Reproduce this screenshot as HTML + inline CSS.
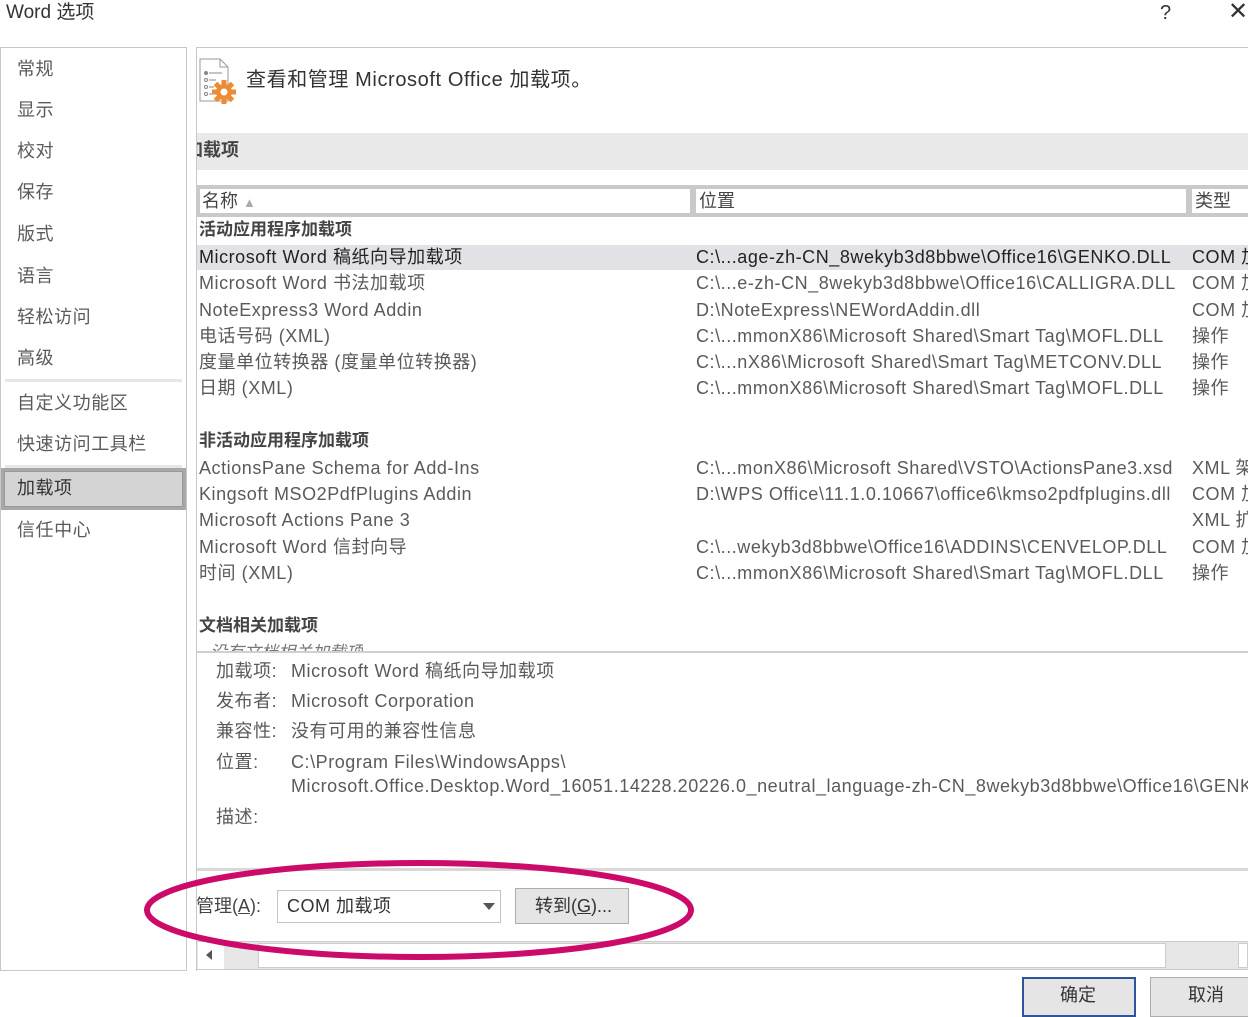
<!DOCTYPE html>
<html><head><meta charset="utf-8"><style>
*{margin:0;padding:0;box-sizing:border-box}
body{width:1248px;height:1009px;background:#fff;position:relative;overflow:hidden;font-family:"Liberation Sans","Noto Sans CJK SC",sans-serif;font-size:18px;color:#444}
.a{position:absolute;white-space:nowrap;line-height:24px}
.g{color:#5a5a5a;letter-spacing:.55px}
.b{font-weight:bold;color:#444;font-size:17px}
</style></head><body>
<div class="a" style="left:6px;top:1px;font-size:19px;color:#333">Word 选项</div>
<div class="a" style="left:1160px;top:1px;font-size:20px;color:#333">?</div>
<div class="a" style="left:1228px;top:0px;font-size:24px;color:#333">✕</div>

<div class="a" style="left:0;top:47px;width:187px;height:924px;border:1px solid #c8c8c8;background:#fff"></div>
<div class="a g" style="left:17px;top:57px">常规</div>
<div class="a g" style="left:17px;top:98px">显示</div>
<div class="a g" style="left:17px;top:139px">校对</div>
<div class="a g" style="left:17px;top:180px">保存</div>
<div class="a g" style="left:17px;top:222px">版式</div>
<div class="a g" style="left:17px;top:264px">语言</div>
<div class="a g" style="left:17px;top:305px">轻松访问</div>
<div class="a g" style="left:17px;top:346px">高级</div>
<div class="a" style="left:5px;top:379px;width:177px;height:3px;background:#e6e6e6"></div>
<div class="a g" style="left:17px;top:391px">自定义功能区</div>
<div class="a g" style="left:17px;top:432px">快速访问工具栏</div>
<div class="a" style="left:5px;top:465px;width:177px;height:3px;background:#e6e6e6"></div>
<div class="a" style="left:1px;top:468px;width:185px;height:42px;background:#a8a8a8"></div>
<div class="a" style="left:4px;top:471px;width:179px;height:36px;background:#d4d4d4;border:1px solid #999"></div>
<div class="a" style="left:17px;top:476px;color:#333;letter-spacing:.5px">加载项</div>
<div class="a g" style="left:17px;top:518px">信任中心</div>

<div class="a" style="left:196px;top:47px;width:1px;height:924px;background:#c8c8c8"></div>
<div class="a" style="left:196px;top:47px;width:1052px;height:1px;background:#c8c8c8"></div>
<svg class="a" style="left:198px;top:57px" width="42" height="48" viewBox="0 0 42 48">
<path d="M2 2H22L30 10V44H2Z" fill="#fff" stroke="#999" stroke-width="1"/>
<path d="M22 2V10H30" fill="none" stroke="#999"/>
<g fill="none" stroke="#888" stroke-width="1"><circle cx="8" cy="16" r="1.5" fill="#888"/><circle cx="8" cy="23" r="1.5"/><circle cx="8" cy="30" r="1.5"/><circle cx="8" cy="37" r="1.5"/><path d="M11 16H24M11 23H18M11 30H16M11 37H16"/></g>
<g fill="#ed8b34" transform="translate(26 35)"><circle r="8"/><rect x="-2.5" y="-12" width="5" height="24"/><rect x="-12" y="-2.5" width="24" height="5"/><rect x="-2.5" y="-12" width="5" height="24" transform="rotate(45)"/><rect x="-2.5" y="-12" width="5" height="24" transform="rotate(-45)"/><circle r="3.5" fill="#fff"/></g>
</svg>
<div class="a" style="left:246px;top:68px;font-size:20px;color:#333;letter-spacing:.6px">查看和管理 Microsoft Office 加载项。</div>
<div class="a" style="left:197px;top:133px;width:1051px;height:37px;background:#e9e9e9"></div>
<div class="a" style="left:197px;top:138px;font-weight:bold;color:#444;width:42px;overflow:hidden;direction:rtl">加载项</div>

<div class="a" style="left:197px;top:185px;width:1051px;height:32px;background:#c9c9c9"></div>
<div class="a" style="left:200px;top:189px;width:490px;height:24px;background:#fff"></div>
<div class="a" style="left:696px;top:189px;width:490px;height:24px;background:#fff"></div>
<div class="a" style="left:1192px;top:189px;width:56px;height:24px;background:#fff"></div>
<div class="a" style="left:202px;top:189px;color:#444">名称 <span style="font-size:13px;color:#aaa">▲</span></div>
<div class="a" style="left:699px;top:189px;color:#444">位置</div>
<div class="a" style="left:1195px;top:189px;color:#444">类型</div>

<div class="a b" style="left:199px;top:218px">活动应用程序加载项</div>
<div class="a" style="left:197px;top:245px;width:1051px;height:25px;background:#e2e2e6"></div>
<div class="a g" style="left:199px;top:245px;color:#222">Microsoft Word 稿纸向导加载项</div>
<div class="a g" style="left:696px;top:245px;color:#222">C:\...age-zh-CN_8wekyb3d8bbwe\Office16\GENKO.DLL</div>
<div class="a g" style="left:1192px;top:245px;color:#222">COM 加</div>

<div class="a g" style="left:199px;top:271px">Microsoft Word 书法加载项</div>
<div class="a g" style="left:696px;top:271px">C:\...e-zh-CN_8wekyb3d8bbwe\Office16\CALLIGRA.DLL</div>
<div class="a g" style="left:1192px;top:271px">COM 加</div>
<div class="a g" style="left:199px;top:298px">NoteExpress3 Word Addin</div>
<div class="a g" style="left:696px;top:298px">D:\NoteExpress\NEWordAddin.dll</div>
<div class="a g" style="left:1192px;top:298px">COM 加</div>
<div class="a g" style="left:199px;top:324px">电话号码 (XML)</div>
<div class="a g" style="left:696px;top:324px">C:\...mmonX86\Microsoft Shared\Smart Tag\MOFL.DLL</div>
<div class="a g" style="left:1192px;top:324px">操作</div>
<div class="a g" style="left:199px;top:350px">度量单位转换器 (度量单位转换器)</div>
<div class="a g" style="left:696px;top:350px">C:\...nX86\Microsoft Shared\Smart Tag\METCONV.DLL</div>
<div class="a g" style="left:1192px;top:350px">操作</div>
<div class="a g" style="left:199px;top:376px">日期 (XML)</div>
<div class="a g" style="left:696px;top:376px">C:\...mmonX86\Microsoft Shared\Smart Tag\MOFL.DLL</div>
<div class="a g" style="left:1192px;top:376px">操作</div>

<div class="a b" style="left:199px;top:429px">非活动应用程序加载项</div>
<div class="a g" style="left:199px;top:456px">ActionsPane Schema for Add-Ins</div>
<div class="a g" style="left:696px;top:456px">C:\...monX86\Microsoft Shared\VSTO\ActionsPane3.xsd</div>
<div class="a g" style="left:1192px;top:456px">XML 架</div>
<div class="a g" style="left:199px;top:482px">Kingsoft MSO2PdfPlugins Addin</div>
<div class="a g" style="left:696px;top:482px;width:480px;overflow:hidden">D:\WPS Office\11.1.0.10667\office6\kmso2pdfplugins.dll</div>
<div class="a g" style="left:1192px;top:482px">COM 加</div>
<div class="a g" style="left:199px;top:508px">Microsoft Actions Pane 3</div>
<div class="a g" style="left:1192px;top:508px">XML 扩</div>
<div class="a g" style="left:199px;top:535px">Microsoft Word 信封向导</div>
<div class="a g" style="left:696px;top:535px">C:\...wekyb3d8bbwe\Office16\ADDINS\CENVELOP.DLL</div>
<div class="a g" style="left:1192px;top:535px">COM 加</div>
<div class="a g" style="left:199px;top:561px">时间 (XML)</div>
<div class="a g" style="left:696px;top:561px">C:\...mmonX86\Microsoft Shared\Smart Tag\MOFL.DLL</div>
<div class="a g" style="left:1192px;top:561px">操作</div>

<div class="a b" style="left:199px;top:614px">文档相关加载项</div>
<div class="a" style="left:210px;top:642px;height:10px;overflow:hidden;font-style:italic;color:#777;font-size:17px;line-height:22px">没有文档相关加载项</div>
<div class="a" style="left:197px;top:651px;width:1051px;height:2px;background:#d0d0d0"></div>

<div class="a g" style="left:216px;top:659px">加载项:</div>
<div class="a g" style="left:291px;top:659px">Microsoft Word 稿纸向导加载项</div>
<div class="a g" style="left:216px;top:689px">发布者:</div>
<div class="a g" style="left:291px;top:689px">Microsoft Corporation</div>
<div class="a g" style="left:216px;top:719px">兼容性:</div>
<div class="a g" style="left:291px;top:719px">没有可用的兼容性信息</div>
<div class="a g" style="left:216px;top:750px">位置:</div>
<div class="a g" style="left:291px;top:750px">C:\Program Files\WindowsApps\</div>
<div class="a g" style="left:291px;top:774px">Microsoft.Office.Desktop.Word_16051.14228.20226.0_neutral_language-zh-CN_8wekyb3d8bbwe\Office16\GENKO.DLL</div>
<div class="a g" style="left:216px;top:805px">描述:</div>
<div class="a" style="left:197px;top:868px;width:1051px;height:3px;background:#d8d8d8"></div>

<div class="a" style="left:196px;top:894px;color:#444">管理(<u>A</u>):</div>
<div class="a" style="left:277px;top:890px;width:224px;height:33px;border:1px solid #c4c4c4;background:#fff"></div>
<div class="a" style="left:287px;top:894px;color:#333;letter-spacing:.5px">COM 加载项</div>
<div class="a" style="left:483px;top:903px;width:0;height:0;border-left:6px solid transparent;border-right:6px solid transparent;border-top:7px solid #555"></div>
<div class="a" style="left:515px;top:888px;width:114px;height:36px;border:1px solid #adadad;background:#e5e5e5"></div>
<div class="a" style="left:535px;top:894px;color:#333">转到(<u>G</u>)...</div>

<div class="a" style="left:197px;top:941px;width:1051px;height:29px;background:#e6e6e6;border-top:1px solid #ccc;border-bottom:1px solid #ccc"></div>
<div class="a" style="left:198px;top:942px;width:26px;height:27px;background:#fff"></div>
<div class="a" style="left:206px;top:950px;width:0;height:0;border-top:5px solid transparent;border-bottom:5px solid transparent;border-right:6px solid #555"></div>
<div class="a" style="left:258px;top:943px;width:908px;height:25px;background:#fff;border:1px solid #ccc"></div>
<div class="a" style="left:1238px;top:943px;width:10px;height:25px;background:#fff;border:1px solid #ccc"></div>

<svg class="a" style="left:140px;top:855px" width="560" height="110"><ellipse cx="279" cy="55" rx="272" ry="47" fill="none" stroke="#cc0a6a" stroke-width="6"/></svg>

<div class="a" style="left:1022px;top:977px;width:114px;height:40px;border:2px solid #2b579a;background:#e5e5e5"></div>
<div class="a" style="left:1060px;top:983px;color:#333">确定</div>
<div class="a" style="left:1150px;top:977px;width:110px;height:40px;border:1px solid #adadad;background:#e5e5e5"></div>
<div class="a" style="left:1188px;top:983px;color:#333">取消</div>
</body></html>
